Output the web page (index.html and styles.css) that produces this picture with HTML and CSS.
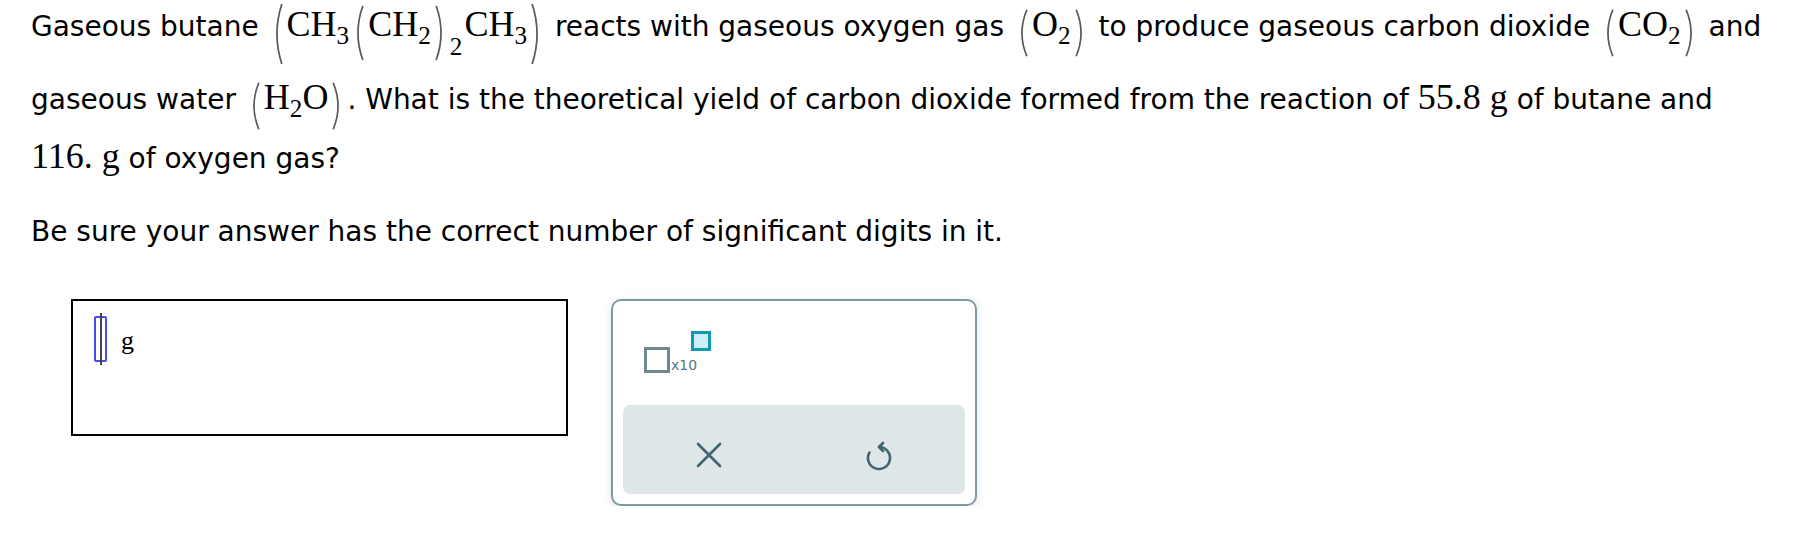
FILE: index.html
```html
<!DOCTYPE html>
<html>
<head>
<meta charset="utf-8">
<link rel="stylesheet" href="styles.css">
</head>
<body>
<div class="page">
  <div class="q">
    <div class="line l1">Gaseous butane <span class="chem"><svg class="paren p-xl" viewBox="0 0 12 62" preserveAspectRatio="none"><path d="M10 1 Q1 31 10 61"/></svg><span class="el">CH<sub>3</sub></span><svg class="paren p-lg" viewBox="0 0 12 62" preserveAspectRatio="none"><path d="M10 1 Q1 31 10 61"/></svg><span class="el">CH<sub>2</sub></span><svg class="paren p-lg" viewBox="0 0 12 62" preserveAspectRatio="none"><path d="M2 1 Q11 31 2 61"/></svg><sub class="low">2</sub><span class="el">CH<sub>3</sub></span><svg class="paren p-xl" viewBox="0 0 12 62" preserveAspectRatio="none"><path d="M2 1 Q11 31 2 61"/></svg></span> reacts with gaseous oxygen gas <span class="chem"><svg class="paren p-md" viewBox="0 0 12 62" preserveAspectRatio="none"><path d="M10 1 Q1 31 10 61"/></svg><span class="el">O<sub>2</sub></span><svg class="paren p-md" viewBox="0 0 12 62" preserveAspectRatio="none"><path d="M2 1 Q11 31 2 61"/></svg></span> to produce gaseous carbon dioxide <span class="chem"><svg class="paren p-md" viewBox="0 0 12 62" preserveAspectRatio="none"><path d="M10 1 Q1 31 10 61"/></svg><span class="el">CO<sub>2</sub></span><svg class="paren p-md" viewBox="0 0 12 62" preserveAspectRatio="none"><path d="M2 1 Q11 31 2 61"/></svg></span> and</div>
    <div class="line l2">gaseous water <span class="chem"><svg class="paren p-md" viewBox="0 0 12 62" preserveAspectRatio="none"><path d="M10 1 Q1 31 10 61"/></svg><span class="el">H<sub>2</sub>O</span><svg class="paren p-md" viewBox="0 0 12 62" preserveAspectRatio="none"><path d="M2 1 Q11 31 2 61"/></svg></span>. What is the theoretical yield of carbon dioxide formed from the reaction of <span class="num">55.8 g</span> of butane and</div>
    <div class="line l3"><span class="num">116. g</span> of oxygen gas?</div>
  </div>
  <p class="note">Be sure your answer has the correct number of significant digits in it.</p>
  <div class="answer-row">
    <div class="input-box">
      <span class="cursor"><span class="beam"></span></span>
      <span class="unit">g</span>
    </div>
    <div class="panel">
      <div class="sci">
        <span class="mant"></span><span class="x10">x10</span><span class="exp"></span>
      </div>
      <div class="actions">
        <button class="act" aria-label="clear"><svg width="28" height="28" viewBox="0 0 28 28"><path d="M3 3 L25 25 M25 3 L3 25"/></svg></button>
        <button class="act" aria-label="undo"><svg width="30" height="32" viewBox="0 0 30 32"><path d="M14 8 A11 11 0 1 1 4.4 13.6"/><path d="M18 4 L14 8 L18 12"/></svg></button>
      </div>
    </div>
  </div>
</div>
</body>
</html>
```
FILE: styles.css
```css
html, body {
  margin: 0;
  padding: 0;
  background: #fff;
}
.page {
  padding: 0 0 0 31px;
  font-family: "DejaVu Sans", Verdana, sans-serif;
  color: #000;
}
.q {
  font-size: 28px;
}
.line {
  white-space: nowrap;
  line-height: 50px;
}
.l1 { height: 70px; padding-top: 2px; }
.l2 { height: 59px; }
.l3 { height: 50px; }
.chem {
  font-family: "Liberation Serif", "Times New Roman", serif;
  font-size: 36px;
  line-height: 1;
}
.el { white-space: nowrap; }
sub {
  font-size: 0.7em;
  vertical-align: -0.3em;
  line-height: 0;
}
sub.low {
  vertical-align: -0.75em;
  margin: 0 2px 0 0;
}
.paren {
  display: inline-block;
  fill: none;
  stroke: #5a5a5a;
  stroke-width: 1.6;
  width: 13px;
  margin: 0 3px;
}
.p-xl { height: 62px; vertical-align: -29px; }
.p-lg { height: 56px; vertical-align: -25px; }
.p-md { height: 48px; vertical-align: -21px; }
.num {
  font-family: "Liberation Serif", "Times New Roman", serif;
  font-size: 36px;
}
.note {
  margin: 26px 0 0;
  font-size: 28px;
  line-height: 50px;
}
.answer-row {
  display: flex;
  align-items: flex-start;
  margin-top: 42px;
  padding-left: 40px;
}
.input-box {
  width: 497px;
  height: 137px;
  border: 2px solid #000;
  display: flex;
  align-items: flex-start;
  padding: 17px 0 0 21px;
  box-sizing: border-box;
  gap: 14px;
}
.cursor {
  position: relative;
  width: 9px;
  height: 42px;
  border: 2px solid #4a4af0;
  border-radius: 2px;
  margin-top: -2px;
}
.beam {
  position: absolute;
  left: 3.5px;
  top: -5px;
  width: 2px;
  height: 52px;
  background: #444;
}
.unit {
  font-family: "Liberation Serif", serif;
  font-size: 26px;
  margin-top: 8px;
}
.panel {
  margin-left: 43px;
  width: 366px;
  height: 207px;
  box-sizing: border-box;
  border: 2px solid #7f9aa3;
  border-radius: 10px;
  box-shadow: 0 2px 8px rgba(0,0,0,0.12);
  padding: 0 10px 10px;
  display: flex;
  flex-direction: column;
}
.sci {
  display: flex;
  align-items: flex-end;
  height: 72px;
  padding-left: 21px;
}
.mant {
  width: 20px;
  height: 20px;
  border: 3px solid #6e8891;
}
.x10 {
  font-family: "DejaVu Sans", sans-serif;
  font-size: 14px;
  color: #5a7680;
  margin-left: 1px;
  line-height: 16px;
}
.exp {
  width: 14px;
  height: 14px;
  border: 3px solid #0e9ab4;
  background: #cdeef4;
  align-self: flex-start;
  margin-top: 30px;
  margin-left: -6px;
}
.actions {
  margin-top: auto;
  height: 89px;
  background: #dfe6e8;
  border-radius: 7px;
  display: flex;
}
.act {
  flex: 1;
  border: 0;
  background: transparent;
  display: flex;
  align-items: center;
  justify-content: center;
  padding: 10px 0 0;
}
.act svg {
  fill: none;
  stroke: #3f6570;
  stroke-width: 2.6;
  stroke-linecap: round;
  stroke-linejoin: round;
}
```
